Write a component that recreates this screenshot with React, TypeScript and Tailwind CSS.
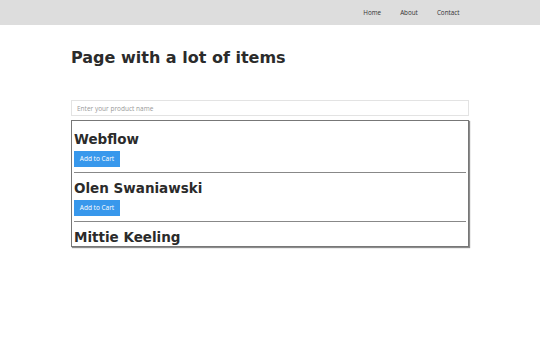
const items = ["Webflow", "Olen Swaniawski", "Mittie Keeling"];

function NavBar() {
  return (
    <div className="h-[25px] bg-[#dddddd]">
      <div className="mx-auto flex h-full w-[398px] items-center justify-end">
        {["Home", "About", "Contact"].map((l) => (
          <a
            key={l}
            className="px-[9.5px] text-[6.3px] text-[#333] font-['Open_Sans',sans-serif]"
          >
            {l}
          </a>
        ))}
      </div>
    </div>
  );
}

export default function App() {
  return (
    <div className="min-h-[360px] bg-white font-['DejaVu_Sans',sans-serif] text-[#333]">
      <NavBar />
      <div className="mx-auto w-[398px]">
        <h1 className="mt-[23px] text-[16px] font-bold leading-[19px] text-[#2b2b2b]">
          Page with a lot of items
        </h1>
        <input
          className="mt-[33px] block h-[16px] w-full border border-[#e3e3e3] px-[5px] text-[6.5px] font-['Open_Sans',sans-serif] placeholder:text-[#999] outline-none"
          placeholder="Enter your product name"
        />
        <div className="mt-[4px] h-[127px] overflow-hidden border border-[#777] px-[2px] pt-[3px] shadow-[1px_1px_1px_rgba(0,0,0,0.45)]">
          {items.map((name, i) => (
            <div key={name} className="border-b border-[#888] pt-[7px] pb-[5px]">
              <h2 className="text-[13.5px] font-bold leading-[16px] text-[#2b2b2b]">{name}</h2>
              {i < items.length - 1 && (
                <button className="mt-[4px] block h-[16px] w-[46px] bg-[#3898ec] text-[6.5px] leading-[16px] text-white font-['Open_Sans',sans-serif]">
                  Add to Cart
                </button>
              )}
            </div>
          ))}
        </div>
      </div>
    </div>
  );
}
